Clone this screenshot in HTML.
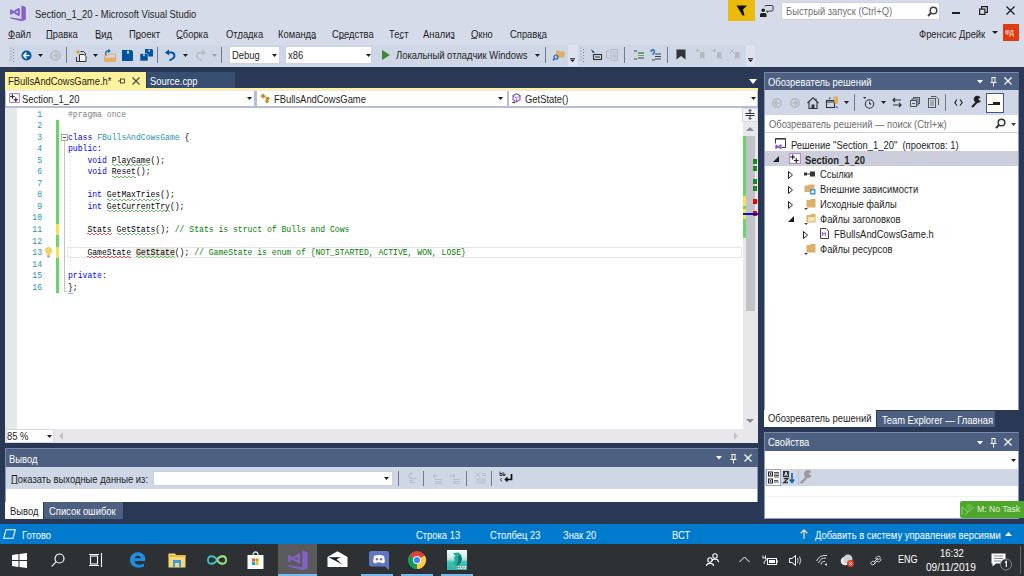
<!DOCTYPE html>
<html><head><meta charset="utf-8">
<style>
*{margin:0;padding:0;box-sizing:border-box}
html,body{width:1024px;height:576px;overflow:hidden}
body{position:relative;background:#293955;font-family:"Liberation Sans",sans-serif;font-size:9.4px;line-height:12px;color:#1e1e1e}
.a{position:absolute}
.t{position:absolute;white-space:pre;line-height:12px;font-size:10.5px;transform:scaleX(.895);transform-origin:0 0}
.m{font-family:"Liberation Mono",monospace}
.w{color:#fff}
svg{position:absolute;overflow:visible}
</style></head><body>

<!-- ===== TOP CHROME ===== -->
<div class="a" style="left:0;top:0;width:1024px;height:67px;background:#d6dbe9"></div>
<!-- VS logo -->
<svg style="left:6px;top:2px" width="24" height="24" viewBox="0 0 24 24"><g fill="#8661c5" fill-rule="evenodd"><path d="M15.4 3.3 L19.8 5.2 V17.8 L15.8 19.3 L15.4 18.6Z"/><path d="M3.8 15.2 L15.4 17.0 L15.8 19.3 L4.6 16.4Z"/></g><g fill="none" stroke="#8661c5" stroke-linejoin="round"><path d="M4.9 8.1 L7.3 10 L4.9 11.9Z" stroke-width="1.7"/><path d="M7.6 10 L12.9 6.9 V13.1Z" stroke-width="1.9"/></g></svg>
<div class="t" style="left:35px;top:7.9px;color:#1e1e1e">Section_1_20 - Microsoft Visual Studio</div>

<!-- feedback flag -->
<div class="a" style="left:728px;top:0;width:27px;height:21px;background:#eabb0c"></div>
<svg style="left:736px;top:5px" width="12" height="12" viewBox="0 0 12 12"><path d="M0.5 0.5 L11 0.5 L7 4.5 L8.5 10.5 L6.5 10.5 Z" fill="#111"/></svg>
<!-- person icon -->
<svg style="left:759px;top:4.5px" width="15" height="13" viewBox="0 0 15 13"><path d="M6 1.5 Q6 0.5 7 0.5 H13 Q14 0.5 14 1.5 V5 Q14 6 13 6 H10 L8.5 7.5 V6 H7" fill="none" stroke="#2a2a2a" stroke-width="0.9"/><circle cx="4.2" cy="5.2" r="1.8" fill="#1e1e1e"/><path d="M1 12 V9.5 Q1 8 2.5 8 H6 Q7.5 8 7.5 9.5 V12Z" fill="#1e1e1e"/></svg>
<!-- quick launch -->
<div class="a" style="left:781px;top:2px;width:159px;height:18px;background:#fff;border:1px solid #cbd1e0"></div>
<div class="t" style="left:786px;top:5.4px;color:#717171">Быстрый запуск (Ctrl+Q)</div>
<svg style="left:927px;top:6px" width="11" height="11" viewBox="0 0 11 11"><circle cx="6.5" cy="4.5" r="3.3" fill="none" stroke="#424242" stroke-width="1.5"/><path d="M4.2 6.8 L1 10" stroke="#424242" stroke-width="2"/></svg>
<!-- window buttons -->
<div class="a" style="left:952px;top:12px;width:8px;height:2px;background:#1e1e1e"></div>
<svg style="left:979px;top:6px" width="9" height="9" viewBox="0 0 9 9"><rect x="0.6" y="3.1" width="5.3" height="5.3" fill="none" stroke="#1e1e1e" stroke-width="1.2"/><path d="M2.6 3 V0.6 H8.4 V6.4 H6" fill="none" stroke="#1e1e1e" stroke-width="1.2"/></svg>
<svg style="left:1006px;top:6px" width="9" height="9" viewBox="0 0 9 9"><path d="M0.5 0.5 L8.5 8.5 M8.5 0.5 L0.5 8.5" stroke="#1e1e1e" stroke-width="1.3"/></svg>

<!-- menu -->
<div class="t" style="left:8px;top:27.9px">Файл</div>
<div class="t" style="left:46px;top:27.9px">Правка</div>
<div class="t" style="left:95px;top:27.9px">Вид</div>
<div class="t" style="left:129px;top:27.9px">Проект</div>
<div class="t" style="left:176px;top:27.9px">Сборка</div>
<div class="t" style="left:226px;top:27.9px">Отладка</div>
<div class="t" style="left:278px;top:27.9px">Команда</div>
<div class="t" style="left:332px;top:27.9px">Средства</div>
<div class="t" style="left:389px;top:27.9px">Тест</div>
<div class="t" style="left:423px;top:27.9px">Анализ</div>
<div class="t" style="left:471px;top:27.9px">Окно</div>
<div class="t" style="left:510px;top:27.9px">Справка</div>
<div class="a" style="left:8px;top:38px;width:7px;height:1px;background:#5a5a5a"></div>
<div class="a" style="left:46px;top:38px;width:7px;height:1px;background:#5a5a5a"></div>
<div class="a" style="left:96px;top:38px;width:6px;height:1px;background:#5a5a5a"></div>
<div class="a" style="left:136px;top:38px;width:5px;height:1px;background:#5a5a5a"></div>
<div class="a" style="left:177px;top:38px;width:6px;height:1px;background:#5a5a5a"></div>
<div class="a" style="left:237px;top:38px;width:5px;height:1px;background:#5a5a5a"></div>
<div class="a" style="left:312px;top:38px;width:4px;height:1px;background:#5a5a5a"></div>
<div class="a" style="left:339px;top:38px;width:7px;height:1px;background:#5a5a5a"></div>
<div class="a" style="left:399px;top:38px;width:4px;height:1px;background:#5a5a5a"></div>
<div class="a" style="left:451px;top:38px;width:4px;height:1px;background:#5a5a5a"></div>
<div class="a" style="left:471px;top:38px;width:6px;height:1px;background:#5a5a5a"></div>
<div class="a" style="left:539px;top:38px;width:4px;height:1px;background:#5a5a5a"></div>
<div class="t" style="left:919px;top:27.6px">Френсис Дрейк</div>
<svg style="left:992px;top:31px" width="6" height="4" viewBox="0 0 6 4"><path d="M0 0 H6 L3 3Z" fill="#1e1e1e"/></svg>
<div class="a" style="left:1003px;top:24px;width:16px;height:17px;background:#e03c14"></div>
<div class="t" style="left:1005px;top:27px;font-size:7px;color:#fff">ФД</div>

<!-- toolbar -->
<div class="a" style="left:9px;top:45px;width:559px;height:21px;background:#cfd6e5"></div>
<div class="a" style="left:568px;top:45px;width:10px;height:21px;background:#dde2ee"></div>
<div class="a" style="left:578px;top:45px;width:168px;height:21px;background:#cfd6e5"></div>
<div class="a" style="left:746px;top:45px;width:9px;height:21px;background:#dde2ee"></div>
<!-- grips -->
<svg style="left:10px;top:47px" width="5" height="16" viewBox="0 0 5 16"><path d="M0.5 0.5h1v1h-1zM3 2h1v1h-1zM0.5 3.5h1v1h-1zM3 5h1v1h-1zM0.5 6.5h1v1h-1zM3 8h1v1h-1zM0.5 9.5h1v1h-1zM3 11h1v1h-1zM0.5 12.5h1v1h-1zM3 14h1v1h-1z" fill="#7b8aab"/></svg>
<svg style="left:580px;top:47px" width="5" height="16" viewBox="0 0 5 16"><path d="M0.5 0.5h1v1h-1zM3 2h1v1h-1zM0.5 3.5h1v1h-1zM3 5h1v1h-1zM0.5 6.5h1v1h-1zM3 8h1v1h-1zM0.5 9.5h1v1h-1zM3 11h1v1h-1zM0.5 12.5h1v1h-1zM3 14h1v1h-1z" fill="#7b8aab"/></svg>
<!-- back / fwd -->
<svg style="left:21px;top:50px" width="11" height="11" viewBox="0 0 11 11"><circle cx="5.5" cy="5.5" r="5" fill="#00539c"/><path d="M2.5 5.5 L5.5 2.5 M2.5 5.5 L5.5 8.5 M2.5 5.5 H8.5" stroke="#fff" stroke-width="1.6"/></svg>
<svg style="left:38px;top:54px" width="6" height="3" viewBox="0 0 6 3"><path d="M0 0H5L2.5 3Z" fill="#1e1e1e"/></svg>
<svg style="left:50px;top:50px" width="11" height="11" viewBox="0 0 11 11"><circle cx="5.5" cy="5.5" r="4.5" fill="none" stroke="#b5b8bf" stroke-width="1.6"/><path d="M8 5.5 L5.5 3 M8 5.5 L5.5 8 M8 5.5 H3" stroke="#b5b8bf" stroke-width="1.4"/></svg>
<div class="a" style="left:66px;top:47px;width:1px;height:16px;background:#6c7a96"></div>
<!-- new project -->
<svg style="left:75px;top:49px" width="12" height="13" viewBox="0 0 12 13"><path d="M5.5 2.5 H8.5 L10.5 4.5 V6" fill="none" stroke="#333" stroke-width="1"/><path d="M4.5 5.5 H9 L11 7.5 V12.5 H4.5 Z" fill="#f3f3f3" stroke="#333" stroke-width="1"/><path d="M1.5 8 V12.5 H4.5" fill="none" stroke="#333" stroke-width="1"/><path d="M3 0.3 L3.7 2.3 L5.7 3 L3.7 3.7 L3 5.7 L2.3 3.7 L0.3 3 L2.3 2.3Z" fill="#d89b2f"/><circle cx="3" cy="3" r="1.3" fill="#d89b2f"/></svg>
<svg style="left:93px;top:54px" width="6" height="3" viewBox="0 0 6 3"><path d="M0 0H5L2.5 3Z" fill="#1e1e1e"/></svg>
<!-- open -->
<svg style="left:104px;top:49px" width="12" height="13" viewBox="0 0 12 13"><path d="M0.5 6.5 H4 L5 5 H11.5 V12.5 H0.5 Z" fill="none" stroke="#d9ad66" stroke-width="1"/><path d="M0.5 8.5 H11.5 V12.5 H0.5Z" fill="#e3b163"/><path d="M1.8 6 V4 Q1.8 2 4 2 H5.5 M4.3 0.5 L5.8 2 L4.3 3.5" fill="none" stroke="#1e66b9" stroke-width="1.3"/></svg>
<!-- save -->
<svg style="left:122px;top:50px" width="11" height="11" viewBox="0 0 11 11"><path d="M0 0 H9.5 L11 1.5 V11 H0Z" fill="#00539c"/><rect x="5" y="0.8" width="2" height="2.7" fill="#cfd6e5"/><path d="M2 0 V4.5 H8.5 V0" fill="none" stroke="#00539c" stroke-width="0.8"/></svg>
<svg style="left:140px;top:49px" width="13" height="12" viewBox="0 0 13 12"><path d="M5 0 H12 L13 1 V7.5 H5Z" fill="#00539c"/><rect x="8.5" y="0.6" width="1.5" height="2" fill="#cfd6e5"/><path d="M0 4.5 H7 L8 5.5 V12 H0Z" fill="#00539c" stroke="#cfd6e5" stroke-width="0.6"/><rect x="3.2" y="5.1" width="1.5" height="2" fill="#cfd6e5"/></svg>
<div class="a" style="left:157px;top:47px;width:1px;height:16px;background:#6c7a96"></div>
<!-- undo redo -->
<svg style="left:165px;top:49px" width="12" height="12" viewBox="0 0 12 12"><path d="M1.5 3.5 H6 C10 3.5 10.5 8 7.5 9.8 L4.5 11.5" fill="none" stroke="#00539c" stroke-width="1.9"/><path d="M0 3.5 L4 0.5 V6.5Z" fill="#00539c"/></svg>
<svg style="left:183px;top:54px" width="6" height="3" viewBox="0 0 6 3"><path d="M0 0H5L2.5 3Z" fill="#1e1e1e"/></svg>
<svg style="left:194px;top:49px" width="12" height="12" viewBox="0 0 12 12"><path d="M10.5 3.5 H6 C2 3.5 1.5 8 4.5 9.8 L7.5 11.5" fill="none" stroke="#b9bcc4" stroke-width="1.5"/><path d="M12 3.5 L8 0.5 V6.5Z" fill="#b9bcc4"/></svg>
<svg style="left:212px;top:54px" width="6" height="3" viewBox="0 0 6 3"><path d="M0 0H5L2.5 3Z" fill="#9a9fab"/></svg>
<div class="a" style="left:221px;top:47px;width:1px;height:16px;background:#6c7a96"></div>
<!-- combos -->
<div class="a" style="left:229px;top:46px;width:51px;height:18px;background:#fff;border:1px solid #cbd1e0"></div>
<div class="t" style="left:232px;top:49.1px">Debug</div>
<svg style="left:272px;top:54px" width="6" height="3" viewBox="0 0 6 3"><path d="M0 0H5L2.5 3Z" fill="#1e1e1e"/></svg>
<div class="a" style="left:285px;top:46px;width:87px;height:18px;background:#fff;border:1px solid #cbd1e0"></div>
<div class="t" style="left:288px;top:49.1px">x86</div>
<svg style="left:366px;top:54px" width="6" height="3" viewBox="0 0 6 3"><path d="M0 0H5L2.5 3Z" fill="#1e1e1e"/></svg>
<svg style="left:382px;top:50px" width="8" height="10" viewBox="0 0 8 10"><path d="M0 0 L8 5 L0 10Z" fill="#388a34"/></svg>
<div class="t" style="left:396px;top:49.1px">Локальный отладчик Windows</div>
<svg style="left:535px;top:54px" width="6" height="3" viewBox="0 0 6 3"><path d="M0 0H5L2.5 3Z" fill="#1e1e1e"/></svg>
<div class="a" style="left:545px;top:47px;width:1px;height:16px;background:#6c7a96"></div>
<svg style="left:553px;top:49px" width="12" height="12" viewBox="0 0 12 12"><path d="M3 1.5 H6 L7 2.5 H11.5 V8.5 H3Z" fill="#dcb067"/><circle cx="3" cy="8" r="2" fill="none" stroke="#1e66b9" stroke-width="1.2"/><path d="M1.7 9.5 L0 11.5" stroke="#1e66b9" stroke-width="1.4"/></svg>
<svg style="left:570px;top:58px" width="5" height="4" viewBox="0 0 5 4"><path d="M0 0H5V0.8H0Z M0 1.6H5L2.5 4Z" fill="#1e1e1e"/></svg>
<!-- toolbar 2 icons -->
<svg style="left:590px;top:49px" width="12" height="12" viewBox="0 0 12 12"><path d="M1 0 L5 3.5 L2.5 3.8 Z" fill="#00539c"/><rect x="3.5" y="5.5" width="8" height="5" fill="none" stroke="#333" stroke-width="1.1"/><path d="M5 8 H10" stroke="#333"/></svg>
<svg style="left:606px;top:49px" width="12" height="12" viewBox="0 0 12 12"><path d="M0.5 2 H3 M0.5 2 V9 H3 M5 0.5 H11.5 V11.5 H5Z M6.5 3h4M6.5 5h4M6.5 7h4M6.5 9h4" fill="none" stroke="#b5b8bf"/></svg>
<div class="a" style="left:624px;top:47px;width:1px;height:16px;background:#6c7a96"></div>
<svg style="left:634px;top:50px" width="10" height="10" viewBox="0 0 10 10"><path d="M0 1h3M4 3h6M4 5.5h6M4 8h6M0 9h3" stroke="#444" stroke-width="1.2"/><path d="M4 3h6M4 5.5h6" stroke="#4cb84c" stroke-width="1.2"/></svg>
<svg style="left:650px;top:49px" width="11" height="12" viewBox="0 0 11 12"><path d="M1 3 C1 0 5 0 4.5 3 L3 5 V6" fill="none" stroke="#1e66b9" stroke-width="1.3"/><path d="M5 5h6M5 7.5h6M5 10h6M2 11h3" stroke="#444" stroke-width="1.2"/></svg>
<div class="a" style="left:667px;top:47px;width:1px;height:16px;background:#6c7a96"></div>
<svg style="left:676px;top:49px" width="10" height="11" viewBox="0 0 10 11"><path d="M0.5 0.5 H9.5 V10.5 L5 7 L0.5 10.5Z" fill="#333"/></svg>
<svg style="left:695px;top:49px" width="10" height="11" viewBox="0 0 10 11"><path d="M5 1.5 L1 1.5 M3 0 L1 1.5 L3 3" stroke="#b5b8bf" fill="none"/><path d="M5 3 H9.5 V10.5 L7 8.5 L5 10.5Z" fill="#b5b8bf"/></svg>
<svg style="left:712px;top:49px" width="10" height="11" viewBox="0 0 10 11"><path d="M0 1.5 L4 1.5 M2 0 L4 1.5 L2 3" stroke="#b5b8bf" fill="none"/><path d="M5 3 H9.5 V10.5 L7 8.5 L5 10.5Z" fill="#b5b8bf"/></svg>
<svg style="left:730px;top:49px" width="10" height="11" viewBox="0 0 10 11"><path d="M0 0 L4 4 M4 0 L0 4" stroke="#b5b8bf" fill="none"/><path d="M5 3 H9.5 V10.5 L7 8.5 L5 10.5Z" fill="#b5b8bf"/></svg>
<svg style="left:748px;top:58px" width="5" height="4" viewBox="0 0 5 4"><path d="M0 0H5V0.8H0Z M0 1.6H5L2.5 4Z" fill="#1e1e1e"/></svg>

<!-- ===== EDITOR ===== -->
<div class="a" style="left:5px;top:72px;width:141px;height:18px;background:#fff29d"></div>
<div class="t" style="left:8px;top:75px">FBullsAndCowsGame.h*</div>
<svg style="left:118px;top:78px" width="7" height="6" viewBox="0 0 7 6"><path d="M0 3H2.5M2.5 0.5V5.5M2.5 1H6.5V5H2.5" fill="none" stroke="#4a4a4a" stroke-width="1"/></svg>
<svg style="left:132px;top:77px" width="8" height="8" viewBox="0 0 8 8"><path d="M0.5 0.5L7.5 7.5M7.5 0.5L0.5 7.5" stroke="#4a4a4a" stroke-width="1.2"/></svg>
<div class="a" style="left:147px;top:72px;width:88px;height:17px;background:#364e6f"></div>
<div class="t w" style="left:150px;top:75px">Source.cpp</div>
<svg style="left:749px;top:79px" width="8" height="5" viewBox="0 0 8 5"><path d="M0 0H8L4 5Z" fill="#fff"/></svg>
<div class="a" style="left:5px;top:88px;width:753px;height:2px;background:#fff29d"></div>
<!-- nav bar -->
<div class="a" style="left:5px;top:90px;width:753px;height:18px;background:#b4bfd3"></div>
<div class="a" style="left:5px;top:90px;width:753px;height:1px;background:#e6e9f0"></div>
<div class="a" style="left:6px;top:91px;width:248px;height:15px;background:#fff"></div>
<div class="a" style="left:257px;top:91px;width:250px;height:15px;background:#fff"></div>
<div class="a" style="left:509px;top:91px;width:248px;height:15px;background:#fff"></div>
<svg style="left:9px;top:93px" width="11" height="10" viewBox="0 0 11 10"><rect x="0.6" y="0.6" width="9.8" height="8.8" fill="#fff" stroke="#b583d6" stroke-width="1.1"/><path d="M3.4 1.3V5.7M1.2 3.5H5.6M6.8 4.5V8.9M4.6 6.7H9" stroke="#2a2a2a" stroke-width="1.1" fill="none"/><path d="M3.4 2.4L4.5 3.5L3.4 4.6L2.3 3.5ZM6.8 5.6L7.9 6.7L6.8 7.8L5.7 6.7Z" fill="#2a2a2a"/></svg>
<div class="t" style="left:22px;top:92.5px">Section_1_20</div>
<svg style="left:247px;top:97px" width="5" height="3" viewBox="0 0 5 3"><path d="M0 0H5L2.5 3Z" fill="#1e1e1e"/></svg>
<svg style="left:260px;top:93px" width="11" height="11" viewBox="0 0 11 11"><path d="M0.5 3 L3 0.5 L5.5 3 L3 5.5Z M6 5.5 L8 3.5 L10 5.5 L8 7.5Z M5 8.5 L7 6.5 L9 8.5 L7 10.5Z" fill="#c48a1b"/><path d="M4 3.5 L7 5 L6 8" stroke="#c48a1b" fill="none"/></svg>
<div class="t" style="left:274px;top:92.5px">FBullsAndCowsGame</div>
<svg style="left:498px;top:97px" width="5" height="3" viewBox="0 0 5 3"><path d="M0 0H5L2.5 3Z" fill="#1e1e1e"/></svg>
<svg style="left:512px;top:93px" width="9" height="10" viewBox="0 0 9 10"><path d="M4.5 0.7 L8 2.7 V6.7 L4.5 8.7 L1 6.7 V2.7Z" fill="none" stroke="#8a5cc4" stroke-width="1.2"/><path d="M1 3L4.5 5L8 3M4.5 5V8.7" stroke="#8a5cc4" fill="none" stroke-width="0.8"/><path d="M0 9.5 H3 M2 8.5 L3 9.5 L2 10.5" stroke="#333" stroke-width="0.8" fill="none"/></svg>
<div class="t" style="left:525px;top:92.5px">GetState()</div>
<svg style="left:751px;top:97px" width="5" height="3" viewBox="0 0 5 3"><path d="M0 0H5L2.5 3Z" fill="#1e1e1e"/></svg>

<!-- editor body -->
<div class="a" style="left:5px;top:108px;width:753px;height:335px;background:#fff"></div>
<div class="a" style="left:5px;top:108px;width:12px;height:321px;background:#e6e7e8"></div>
<!-- vertical scrollbar -->
<div class="a" style="left:743px;top:108px;width:15px;height:321px;background:#e8e8ec"></div>
<div class="a" style="left:742px;top:108px;width:16px;height:14px;background:#f3f4f8;border:1px solid #d5d9e3"></div>
<svg style="left:745px;top:109px" width="10" height="11" viewBox="0 0 10 11"><path d="M0.5 4.5H9.5M0.5 6.5H9.5M5 1V4M5 7V10" stroke="#2a2a2a" stroke-width="1"/><path d="M3.5 2L5 0.5L6.5 2M3.5 9L5 10.5L6.5 9" fill="none" stroke="#2a2a2a"/></svg>
<svg style="left:746px;top:127px" width="8" height="4" viewBox="0 0 8 4"><path d="M0 4H8L4 0Z" fill="#868999"/></svg>
<div class="a" style="left:746px;top:136px;width:9px;height:175px;background:#c2c3c9"></div>
<div class="a" style="left:743px;top:136px;width:3px;height:102px;background:#6bd56b"></div>
<div class="a" style="left:743px;top:196px;width:3px;height:10px;background:#f5e05a"></div>
<div class="a" style="left:743px;top:209px;width:3px;height:10px;background:#f5e05a"></div>
<div class="a" style="left:753px;top:159px;width:4px;height:5px;background:#1d8a1d"></div>
<div class="a" style="left:753px;top:166px;width:4px;height:5px;background:#1d8a1d"></div>
<div class="a" style="left:753px;top:179px;width:4px;height:5px;background:#1d8a1d"></div>
<div class="a" style="left:753px;top:186px;width:4px;height:5px;background:#1d8a1d"></div>
<div class="a" style="left:753px;top:199px;width:4px;height:5px;background:#f20000"></div>
<div class="a" style="left:753px;top:211px;width:4px;height:5px;background:#f20000"></div>
<div class="a" style="left:743px;top:213px;width:15px;height:2px;background:#0a12c8"></div>
<svg style="left:746px;top:419px" width="8" height="4" viewBox="0 0 8 4"><path d="M0 0H8L4 4Z" fill="#868999"/></svg>
<!-- horizontal bar -->
<div class="a" style="left:5px;top:429px;width:753px;height:14px;background:#e8e8ec"></div>
<div class="a" style="left:6px;top:429px;width:48px;height:14px;background:#fff;border:1px solid #d5d9e3"></div>
<div class="t" style="left:7px;top:430.1px">85 %</div>
<svg style="left:47px;top:435px" width="5" height="3" viewBox="0 0 5 3"><path d="M0 0H5L2.5 3Z" fill="#1e1e1e"/></svg>
<svg style="left:59px;top:432px" width="4" height="8" viewBox="0 0 4 8"><path d="M4 0V8L0 4Z" fill="#c2c3c9"/></svg>
<svg style="left:734px;top:432px" width="4" height="8" viewBox="0 0 4 8"><path d="M0 0V8L4 4Z" fill="#c2c3c9"/></svg>

<!-- code gutter -->
<div class="a" style="left:56px;top:120px;width:3px;height:173px;background:#6bd56b"></div>
<div class="a" style="left:56px;top:224px;width:3px;height:11px;background:#f5e05a"></div>
<div class="a" style="left:56px;top:247px;width:3px;height:11px;background:#f5e05a"></div>
<div class="a" style="left:67px;top:247px;width:675px;height:11px;border:1px solid #e3e5ec"></div>
<div class="a" style="left:64px;top:140px;width:1px;height:152px;background:#c4c4c4"></div>
<div class="a" style="left:64px;top:291px;width:3px;height:1px;background:#c4c4c4"></div>
<div class="a" style="left:68px;top:293px;width:5px;height:1px;background:#7fb2e5"></div>
<svg style="left:61px;top:134px" width="7" height="7" viewBox="0 0 7 7"><rect x="0.5" y="0.5" width="6" height="6" fill="#fff" stroke="#a5a5a5"/><path d="M2 3.5H5" stroke="#444"/></svg>
<div class="a" style="left:70px;top:152px;width:1px;height:117px;background:repeating-linear-gradient(#d0d0d0 0 1px,transparent 1px 4px)"></div>
<svg style="left:45px;top:247px" width="7" height="11" viewBox="0 0 7 11"><circle cx="3.5" cy="3.5" r="3" fill="#f7d45c" stroke="#e0b020" stroke-width="0.6"/><rect x="2" y="6" width="3" height="2.5" fill="#f7d45c"/><rect x="2.3" y="8.5" width="2.4" height="2" fill="#999"/></svg>
<div class="a m" id="lnums" style="left:17px;top:108.7px;width:25px;transform:scaleX(0.8695);transform-origin:100% 0;font-size:9.3px;line-height:11.53px;color:#2b91af;text-align:right;white-space:pre">1
2
3
4
5
6
7
8
9
10
11
12
13
14
15
16</div>
<style>
.code{position:absolute;left:68px;top:108.7px;font-family:"Liberation Mono",monospace;font-size:9.3px;line-height:11.53px;white-space:pre;color:#000;transform:scaleX(0.8695);transform-origin:0 0}
.kw{color:#0000ff}.ty{color:#2b91af}.cm{color:#008000}.pp{color:#808080}
.sqg,.sqr{height:2px}
.sqg{background:linear-gradient(90deg,#6cbf6c 50%,transparent 50%) 0 0/4px 1px repeat-x,linear-gradient(90deg,transparent 50%,#6cbf6c 50%) 0 1px/4px 1px repeat-x}
.sqr{background:linear-gradient(90deg,#ee5050 50%,transparent 50%) 0 0/4px 1px repeat-x,linear-gradient(90deg,transparent 50%,#ee5050 50%) 0 1px/4px 1px repeat-x}
.hl{background:#e4e4da}
</style>
<div class="code"><span class="pp">#pragma once</span>

<span class="kw">class</span> <span class="ty">FBullsAndCowsGame</span> {
<span class="kw">public</span>:
    <span class="kw">void</span> <span class="sg">PlayGame</span>();
    <span class="kw">void</span> <span class="sg">Reset</span>();

    <span class="kw">int</span> <span class="sg">GetMaxTries</span>();
    <span class="kw">int</span> <span class="sg">GetCurrentTry</span>();

    <span class="sr">Stats</span> <span class="sg">GetStats</span>(); <span class="cm">// Stats is struct of Bulls and Cows</span>

    <span class="sr">GameState</span> <span class="sg hl">GetState</span>(); <span class="cm">// GameState is enum of {NOT_STARTED, ACTIVE, WON, LOSE}</span>

<span class="kw">private</span>:
};</div>

<div class="a sqg" style="left:111.7px;top:164px;width:38.8px"></div>
<div class="a sqg" style="left:111.7px;top:176px;width:24.3px"></div>
<div class="a sqg" style="left:106.8px;top:199px;width:53.4px"></div>
<div class="a sqg" style="left:106.8px;top:210px;width:63.1px"></div>
<div class="a sqr" style="left:87.4px;top:233px;width:24.3px"></div>
<div class="a sqg" style="left:116.5px;top:233px;width:38.8px"></div>
<div class="a sqr" style="left:87.4px;top:256px;width:43.7px"></div>
<div class="a sqg" style="left:135.9px;top:256px;width:38.8px"></div>

<!-- ===== SOLUTION EXPLORER ===== -->
<div class="a" style="left:764px;top:72px;width:255px;height:338px;background:#fff;border:1px solid #8e9bbc;border-top:none;border-bottom:none"></div>
<div class="a" style="left:764px;top:72px;width:255px;height:18px;background:#4d6082;box-shadow:inset 1px 1px 0 #7888aa"></div>
<div class="t w" style="left:768px;top:76.4px">Обозреватель решений</div>
<svg style="left:977px;top:80px" width="6" height="4" viewBox="0 0 6 4"><path d="M0 0H6L3 3.5Z" fill="#fff"/></svg>
<svg style="left:990px;top:77px" width="7" height="10" viewBox="0 0 7 10"><path d="M1.5 0.5H5.5M2 0.5V5.5M5 0.5V5.5M0.5 5.5H6.5M3.5 5.5V9.5" fill="none" stroke="#fff" stroke-width="1"/></svg>
<svg style="left:1004px;top:77px" width="8" height="8" viewBox="0 0 8 8"><path d="M0.5 0.5L7.5 7.5M7.5 0.5L0.5 7.5" stroke="#fff" stroke-width="1.2"/></svg>
<!-- SE toolbar -->
<div class="a" style="left:765px;top:90px;width:253px;height:25px;background:#cfd6e5"></div>
<svg style="left:772px;top:98px" width="10" height="10" viewBox="0 0 10 10"><circle cx="5" cy="5" r="4.2" fill="none" stroke="#b5b8bf" stroke-width="1.5"/><path d="M2.5 5H7.5M2.5 5L5 2.5M2.5 5L5 7.5" stroke="#b5b8bf" stroke-width="1.3" fill="none"/></svg>
<svg style="left:790px;top:98px" width="10" height="10" viewBox="0 0 10 10"><circle cx="5" cy="5" r="4.2" fill="none" stroke="#b5b8bf" stroke-width="1.5"/><path d="M2.5 5H7.5M7.5 5L5 2.5M7.5 5L5 7.5" stroke="#b5b8bf" stroke-width="1.3" fill="none"/></svg>
<svg style="left:807px;top:97px" width="12" height="12" viewBox="0 0 12 12"><path d="M0.5 6 L6 0.8 L11.5 6 M2 4.8 V11.5 H10 V4.8" fill="none" stroke="#333" stroke-width="1.1"/><rect x="4.5" y="7.5" width="3" height="4" fill="#333"/><path d="M9 1.5V3.5" stroke="#333"/></svg>
<svg style="left:826px;top:96px" width="13" height="13" viewBox="0 0 13 13"><rect x="0.5" y="4.5" width="8" height="7" fill="none" stroke="#333" stroke-width="1.1"/><path d="M0.5 6H8.5" stroke="#333"/><path d="M7 0.5H12V8H9" fill="#dcb067"/><path d="M3 3L4.5 1.5M10 10.5L11.5 12" stroke="#1e66b9" stroke-width="1.2"/></svg>
<svg style="left:844px;top:101px" width="5" height="3" viewBox="0 0 5 3"><path d="M0 0H5L2.5 3Z" fill="#1e1e1e"/></svg>
<div class="a" style="left:854px;top:94px;width:1px;height:17px;background:#6c7a96"></div>
<svg style="left:863px;top:97px" width="12" height="12" viewBox="0 0 12 12"><circle cx="6.5" cy="7" r="4.2" fill="none" stroke="#333" stroke-width="1.1"/><path d="M6.5 4.5V7H8.5" stroke="#333" fill="none"/><path d="M0 0H3.5L1.75 2Z" fill="#333"/></svg>
<svg style="left:881px;top:101px" width="5" height="3" viewBox="0 0 5 3"><path d="M0 0H5L2.5 3Z" fill="#1e1e1e"/></svg>
<svg style="left:892px;top:97px" width="10" height="11" viewBox="0 0 10 11"><path d="M9 3H1M3 1L1 3L3 5M1 8H9M7 6L9 8L7 10" fill="none" stroke="#333" stroke-width="1.2"/></svg>
<svg style="left:910px;top:97px" width="10" height="10" viewBox="0 0 10 10"><rect x="3.5" y="0.5" width="6" height="6" fill="#cfd6e5" stroke="#555"/><rect x="2" y="2" width="6" height="6" fill="#cfd6e5" stroke="#555"/><rect x="0.5" y="3.5" width="6" height="6" fill="#cfd6e5" stroke="#555"/><path d="M2 6.5H5" stroke="#1e66b9"/></svg>
<svg style="left:928px;top:96px" width="11" height="12" viewBox="0 0 11 12"><path d="M3 0.5H8L10.5 3V9" fill="none" stroke="#555"/><rect x="0.5" y="2.5" width="7" height="9" fill="#cfd6e5" stroke="#555"/><path d="M2 5H6M2 7H6M2 9H6" stroke="#777"/></svg>
<div class="a" style="left:945px;top:94px;width:1px;height:17px;background:#6c7a96"></div>
<svg style="left:954px;top:99px" width="9" height="7" viewBox="0 0 9 7"><path d="M3 0.5L0.8 3.5L3 6.5M6 0.5L8.2 3.5L6 6.5" fill="none" stroke="#222" stroke-width="1.2"/></svg>
<svg style="left:971px;top:96px" width="12" height="12" viewBox="0 0 12 12"><path d="M1 11 L6 6" stroke="#222" stroke-width="2.2"/><path d="M5 6.5 A3.5 3.5 0 1 1 9.5 2 L7.5 2.5 L8 4.5 L10 4.5 A3.5 3.5 0 0 1 5 6.5Z" fill="#222"/></svg>
<div class="a" style="left:986px;top:93px;width:18px;height:20px;background:#fffdf0;border:1px solid #3a5a8c"></div>
<div class="a" style="left:988px;top:104px;width:6px;height:1px;background:#222"></div>
<div class="a" style="left:993px;top:101.5px;width:7px;height:3px;background:#222"></div>
<!-- SE search -->
<div class="a" style="left:765px;top:115px;width:253px;height:18px;background:#fff;border-bottom:1px solid #cbd1e0"></div>
<div class="t" style="left:769px;top:117.5px;color:#6d6d6d">Обозреватель решений — поиск (Ctrl+ж)</div>
<svg style="left:995px;top:118px" width="11" height="11" viewBox="0 0 11 11"><circle cx="6.5" cy="4.5" r="3.3" fill="none" stroke="#333" stroke-width="1.5"/><path d="M4.2 6.8 L1 10" stroke="#333" stroke-width="2"/></svg>
<svg style="left:1011px;top:123px" width="5" height="3" viewBox="0 0 5 3"><path d="M0 0H5L2.5 3Z" fill="#444"/></svg>
<!-- tree -->
<div class="a" style="left:765px;top:151px;width:253px;height:15px;background:#cccedb"></div>
<svg style="left:775px;top:137px" width="12" height="13" viewBox="0 0 12 13"><path d="M0.5 6.5 V1.5 H10.5 V10.5 H7" fill="none" stroke="#3a3a3a" stroke-width="1"/><rect x="0.5" y="1" width="10" height="1.6" fill="#3a3a3a"/><g fill="none" stroke="#8a3fd0" stroke-width="1.2" stroke-linejoin="round"><path d="M1 8.3 L3 9.8 L1 11.3Z"/><path d="M3.2 9.8 L6 8 V11.6Z"/></g></svg>
<div class="t" style="left:791px;top:139px">Решение "Section_1_20"  (проектов: 1)</div>
<svg style="left:773px;top:156px" width="6" height="6" viewBox="0 0 6 6"><path d="M6 0V6H0Z" fill="#1e1e1e"/></svg>
<svg style="left:789px;top:153px" width="12" height="11" viewBox="0 0 12 11"><rect x="0.6" y="0.6" width="10.8" height="9.8" fill="#fff" stroke="#b583d6" stroke-width="1.1"/><path d="M3.7 1.6V6.4M1.3 4H6.1M7.3 5.1V9.9M4.9 7.5H9.7" stroke="#2a2a2a" stroke-width="1.1" fill="none"/><path d="M3.7 2.8L4.9 4L3.7 5.2L2.5 4ZM7.3 6.3L8.5 7.5L7.3 8.7L6.1 7.5Z" fill="#2a2a2a"/></svg>
<div class="t" style="left:805px;top:154px;font-weight:bold">Section_1_20</div>
<svg style="left:788px;top:171px" width="5" height="8" viewBox="0 0 5 8"><path d="M0.5 0.5L4.5 4L0.5 7.5Z" fill="none" stroke="#1e1e1e"/></svg>
<svg style="left:804px;top:171px" width="11" height="6" viewBox="0 0 11 6"><rect x="0" y="1.5" width="3" height="3" fill="#333"/><path d="M3 3H6" stroke="#333"/><rect x="6" y="0.5" width="5" height="5" fill="#333"/></svg>
<div class="t" style="left:820px;top:168.4px">Ссылки</div>
<svg style="left:788px;top:186px" width="5" height="8" viewBox="0 0 5 8"><path d="M0.5 0.5L4.5 4L0.5 7.5Z" fill="none" stroke="#1e1e1e"/></svg>
<svg style="left:804px;top:183px" width="12" height="12" viewBox="0 0 12 12"><path d="M0.5 2.5H4L5 1.5H10.5V9H0.5Z" fill="#dcb067"/><rect x="6" y="6" width="5.5" height="5.5" fill="#3b9be0"/><rect x="7.5" y="7.5" width="2.5" height="2.5" fill="#fff"/></svg>
<div class="t" style="left:820px;top:183.4px">Внешние зависимости</div>
<svg style="left:788px;top:201px" width="5" height="8" viewBox="0 0 5 8"><path d="M0.5 0.5L4.5 4L0.5 7.5Z" fill="none" stroke="#1e1e1e"/></svg>
<svg style="left:804px;top:198px" width="12" height="12" viewBox="0 0 12 12"><path d="M2.5 2H6L7 1H11.5V9.5H2.5Z" fill="#dcb067"/><path d="M0 10H4L2 12Z" fill="#444"/></svg>
<div class="t" style="left:820px;top:198.4px">Исходные файлы</div>
<svg style="left:788px;top:216px" width="6" height="6" viewBox="0 0 6 6"><path d="M6 0V6H0Z" fill="#1e1e1e"/></svg>
<svg style="left:804px;top:213px" width="12" height="12" viewBox="0 0 12 12"><path d="M2.5 2H6L7 1H11.5V9.5H2.5Z" fill="#dcb067"/><path d="M4 4H10.5V8.5H4Z" fill="#f3e3c0"/><path d="M0 10H4L2 12Z" fill="#444"/></svg>
<div class="t" style="left:820px;top:213.4px">Файлы заголовков</div>
<svg style="left:803px;top:231px" width="5" height="8" viewBox="0 0 5 8"><path d="M0.5 0.5L4.5 4L0.5 7.5Z" fill="none" stroke="#1e1e1e"/></svg>
<svg style="left:820px;top:228px" width="9" height="11" viewBox="0 0 9 11"><path d="M0.5 0.5H6L8.5 3V10.5H0.5Z" fill="#fff" stroke="#444"/><path d="M2.5 4V8M2.5 6L5.5 5V8" stroke="#9b6bbf" stroke-width="1.2" fill="none"/></svg>
<div class="t" style="left:834px;top:228px">FBullsAndCowsGame.h</div>
<svg style="left:804px;top:243px" width="12" height="12" viewBox="0 0 12 12"><path d="M2.5 2H6L7 1H11.5V9.5H2.5Z" fill="#dcb067"/><path d="M0 10H4L2 12Z" fill="#444"/></svg>
<div class="t" style="left:820px;top:243.4px">Файлы ресурсов</div>
<!-- SE bottom tabs -->
<div class="a" style="left:764px;top:410px;width:112px;height:17px;background:#fff"></div>
<div class="t" style="left:768px;top:412.3px">Обозреватель решений</div>
<div class="a" style="left:877px;top:411px;width:118px;height:16px;background:#4d6082"></div>
<div class="t w" style="left:882px;top:413.5px">Team Explorer — Главная</div>

<!-- ===== PROPERTIES ===== -->
<div class="a" style="left:764px;top:432px;width:255px;height:87px;background:#fff;border:1px solid #8e9bbc;border-top:none"></div>
<div class="a" style="left:764px;top:432px;width:255px;height:19px;background:#4d6082;box-shadow:inset 1px 1px 0 #7888aa"></div>
<div class="t w" style="left:768px;top:436.4px">Свойства</div>
<svg style="left:977px;top:441px" width="6" height="4" viewBox="0 0 6 4"><path d="M0 0H6L3 3.5Z" fill="#fff"/></svg>
<svg style="left:990px;top:438px" width="7" height="10" viewBox="0 0 7 10"><path d="M1.5 0.5H5.5M2 0.5V5.5M5 0.5V5.5M0.5 5.5H6.5M3.5 5.5V9.5" fill="none" stroke="#fff" stroke-width="1"/></svg>
<svg style="left:1004px;top:438px" width="8" height="8" viewBox="0 0 8 8"><path d="M0.5 0.5L7.5 7.5M7.5 0.5L0.5 7.5" stroke="#fff" stroke-width="1.2"/></svg>
<svg style="left:1011px;top:459px" width="5" height="3" viewBox="0 0 5 3"><path d="M0 0H5L2.5 3Z" fill="#1e1e1e"/></svg>
<div class="a" style="left:765px;top:469px;width:253px;height:17px;background:#cfd6e5"></div>
<div class="a" style="left:766px;top:469px;width:15px;height:17px;background:#fdfdfd;border:1px solid #9aa6c0"></div>
<svg style="left:768px;top:471px" width="12" height="13" viewBox="0 0 12 13"><rect x="0.5" y="1" width="4" height="4" fill="#fff" stroke="#222"/><path d="M1.5 3H3.5M2.5 2V4" stroke="#222" stroke-width="0.8"/><rect x="0.5" y="8" width="4" height="4" fill="#fff" stroke="#222"/><path d="M1.5 10H3.5M2.5 9V11" stroke="#222" stroke-width="0.8"/><path d="M6 1.5H11M6 3H11M6 4.5H11M6 6H11M6 9.5H10M6 11H11" stroke="#444" stroke-width="0.9"/></svg>
<svg style="left:783px;top:471px" width="13" height="13" viewBox="0 0 13 13"><rect x="0" y="0" width="6" height="6" fill="#333"/><path d="M1.5 5L3 1L4.5 5M2 3.7H4" stroke="#fff" stroke-width="0.8" fill="none"/><path d="M0.8 7.5H5L0.8 11.5H5" stroke="#333" stroke-width="1.3" fill="none"/><path d="M9 2V11M6.8 8.5L9 11.5L11.2 8.5" stroke="#1064b0" stroke-width="1.6" fill="none"/></svg>
<div class="a" style="left:798px;top:471px;width:1px;height:14px;background:#b4bfd3"></div>
<svg style="left:800px;top:470px" width="14" height="14" viewBox="0 0 14 14"><path d="M1.5 12.5 L7 7" stroke="#9a9a9a" stroke-width="2.4" stroke-linecap="round"/><path d="M6 7.5 A4 4 0 1 1 11.5 2.2 L9 3 L9.5 5.2 L11.8 5 A4 4 0 0 1 6 7.5Z" fill="#9a9a9a"/></svg>
<div class="a" style="left:765px;top:496px;width:253px;height:1px;background:#f0f0f0"></div>
<div class="a" style="left:960px;top:501px;width:64px;height:17px;background:#4ea72c;border-radius:2px 0 0 2px"></div>
<svg style="left:961px;top:503px" width="15" height="13" viewBox="0 0 15 13"><path d="M1 4 L7 9 L13 4 M1 4 L1 12 M7 9 L4 12" fill="none" stroke="#9ed38a" stroke-width="0.9"/><circle cx="8" cy="4" r="3" fill="#60b840"/></svg>
<div class="t" style="left:977px;top:502.7px;font-size:9.7px;color:#e2f2d6">M: No Task</div>

<!-- ===== OUTPUT ===== -->
<div class="a" style="left:5px;top:448px;width:753px;height:54px;background:#fff;border:1px solid #8e9bbc;border-top:none;border-bottom:none"></div>
<div class="a" style="left:5px;top:448px;width:753px;height:19px;background:#4d6082;box-shadow:inset 1px 1px 0 #7888aa"></div>
<div class="t w" style="left:9px;top:453.3px">Вывод</div>
<svg style="left:716px;top:456px" width="6" height="4" viewBox="0 0 6 4"><path d="M0 0H6L3 3.5Z" fill="#fff"/></svg>
<svg style="left:730px;top:454px" width="7" height="10" viewBox="0 0 7 10"><path d="M1.5 0.5H5.5M2 0.5V5.5M5 0.5V5.5M0.5 5.5H6.5M3.5 5.5V9.5" fill="none" stroke="#fff" stroke-width="1"/></svg>
<svg style="left:744px;top:454px" width="8" height="8" viewBox="0 0 8 8"><path d="M0.5 0.5L7.5 7.5M7.5 0.5L0.5 7.5" stroke="#fff" stroke-width="1.2"/></svg>
<div class="a" style="left:6px;top:467px;width:751px;height:22px;background:#cfd6e5"></div>
<div class="t" style="left:11px;top:472.6px">Показать выходные данные из:</div>
<div class="a" style="left:11px;top:483px;width:7px;height:1px;background:#5a5a5a"></div>
<div class="a" style="left:153px;top:471px;width:240px;height:15px;background:#fff;border:1px solid #cbd1e0"></div>
<svg style="left:384px;top:477px" width="5" height="3" viewBox="0 0 5 3"><path d="M0 0H5L2.5 3Z" fill="#1e1e1e"/></svg>
<div class="a" style="left:398px;top:471px;width:1px;height:15px;background:#6c7a96"></div>
<div class="a" style="left:423px;top:471px;width:1px;height:15px;background:#6c7a96"></div>
<div class="a" style="left:466px;top:471px;width:1px;height:15px;background:#6c7a96"></div>
<div class="a" style="left:491px;top:471px;width:1px;height:15px;background:#6c7a96"></div>
<svg style="left:406px;top:472px" width="12" height="12" viewBox="0 0 12 12"><path d="M5 5.5 C2 5.5 2 1.5 5 1.5 H6 M4.5 0 L6 1.5 L4.5 3" stroke="#b3b7c2" stroke-width="0.9" fill="none"/><path d="M4 6.5H11M3 8.5H7M3 10.5H9" stroke="#b3b7c2" stroke-width="0.8"/></svg>
<svg style="left:432px;top:472px" width="11" height="12" viewBox="0 0 11 12"><path d="M6 4H1M3 2L1 4L3 6" stroke="#b3b7c2" stroke-width="1" fill="none"/><path d="M3 7.5H10M3 9.5H10M3 11.2H10" stroke="#b3b7c2" stroke-width="0.8"/></svg>
<svg style="left:450px;top:472px" width="11" height="12" viewBox="0 0 11 12"><path d="M0 4H5M3 2L5 4L3 6" stroke="#b3b7c2" stroke-width="1" fill="none"/><path d="M3 7.5H10M3 9.5H10M3 11.2H10" stroke="#b3b7c2" stroke-width="0.8"/></svg>
<svg style="left:475px;top:472px" width="12" height="12" viewBox="0 0 12 12"><path d="M0.5 0.5L5 5M5 0.5L0.5 5" stroke="#b3b7c2" stroke-width="0.9" fill="none"/><path d="M7 1.5H11M7 3.5H11M1 7H11M1 9H11M1 11H11" stroke="#b3b7c2" stroke-width="0.8"/></svg>
<svg style="left:499px;top:471px" width="14" height="13" viewBox="0 0 14 13"><path d="M1 0.5V4.5M1 2.5H3V4.5H1M4 1V4.5M4 3H6V4.5H4M3 7.5C1 7.5 1 10 3 10" stroke="#333" stroke-width="0.9" fill="none"/><path d="M12.5 3V8.5H6.5M8.5 6.5L6.5 8.5L8.5 10.5" stroke="#111" stroke-width="1.7" fill="none"/></svg>
<div class="a" style="left:5px;top:502px;width:38px;height:17px;background:#fff"></div>
<div class="t" style="left:10px;top:504.8px">Вывод</div>
<div class="a" style="left:44px;top:502px;width:79px;height:17px;background:#4d6082"></div>
<div class="t w" style="left:49px;top:504.8px">Список ошибок</div>

<!-- ===== STATUS BAR ===== -->
<div class="a" style="left:0;top:524px;width:1024px;height:20px;background:#007acc"></div>
<svg style="left:3px;top:529px" width="13" height="10" viewBox="0 0 13 10"><path d="M3 0.7H12.3L10 9.3H0.7Z" fill="none" stroke="#fff" stroke-width="1.1"/></svg>
<div class="t w" style="left:22px;top:528.5px">Готово</div>
<div class="t w" style="left:416px;top:528.5px">Строка 13</div>
<div class="t w" style="left:490px;top:528.5px">Столбец 23</div>
<div class="t w" style="left:563px;top:528.5px">Знак 20</div>
<div class="t w" style="left:672px;top:528.5px">ВСТ</div>
<svg style="left:800px;top:529px" width="8" height="10" viewBox="0 0 8 10"><path d="M4 10V1M0.7 4.3L4 1L7.3 4.3" stroke="#f3dcc0" stroke-width="1.3" fill="none"/></svg>
<div class="t w" style="left:815px;top:528.5px">Добавить в систему управления версиями</div>
<svg style="left:1005px;top:532px" width="7" height="4" viewBox="0 0 7 4"><path d="M0 4H7L3.5 0Z" fill="#fff"/></svg>

<!-- ===== TASKBAR ===== -->
<div class="a" style="left:0;top:544px;width:1024px;height:32px;background:#2e3134"></div>
<svg style="left:12px;top:553px" width="15" height="15" viewBox="0 0 15 15"><path d="M0 2 L6.5 1.1 V7 H0Z M7.5 1 L15 0 V7 H7.5Z M0 8 H6.5 V13.9 L0 13Z M7.5 8 H15 V15 L7.5 14Z" fill="#fff"/></svg>
<svg style="left:51px;top:553px" width="14" height="14" viewBox="0 0 14 14"><circle cx="8.5" cy="5.5" r="4.5" fill="none" stroke="#fff" stroke-width="1.2"/><path d="M5.3 8.7 L0.7 13.3" stroke="#fff" stroke-width="1.2"/></svg>
<svg style="left:89px;top:553px" width="14" height="14" viewBox="0 0 14 14"><rect x="1.5" y="3" width="7" height="8" fill="none" stroke="#fff" stroke-width="1.1"/><path d="M0 1.5H10M0 12.5H10M12.5 0V14" stroke="#fff" stroke-width="1.1"/></svg>
<svg style="left:129px;top:551px" width="17" height="17" viewBox="0 0 17 17"><path d="M1 9 C1 2 9 -1 14 3 C16.5 5 16.5 8 16 10 H5.5 C6 14 11 15 15 12.5 V15.5 C9 18 1 16 1 9Z M5.5 7.3 H11.8 C11.5 4 6.5 4 5.5 7.3Z" fill="#1e8fe0"/></svg>
<svg style="left:168px;top:553px" width="18" height="15" viewBox="0 0 18 15"><path d="M0.5 0.5H7L8 2H17.5V14.5H0.5Z" fill="#f8d775"/><path d="M0.5 2H17.5V4H0.5Z" fill="#e8b84a"/><path d="M5 7H13V14.5H11V10H7V14.5H5Z" fill="#3a9be8"/></svg>
<svg style="left:206px;top:554px" width="22" height="12" viewBox="0 0 22 12"><path d="M11 6 C8 1 2 1 2 6 C2 11 8 11 11 6 C14 1 20 1 20 6 C20 11 14 11 11 6" fill="none" stroke="#3ec3c8" stroke-width="1.8"/><path d="M11 6 C14 1 20 1 20 6 C20 11 14 11 11 6" fill="none" stroke="#a2d86a" stroke-width="1.8"/></svg>
<svg style="left:247px;top:550px" width="17" height="19" viewBox="0 0 17 19"><path d="M6 5 C6 1 11 1 11 5" fill="none" stroke="#ddd" stroke-width="1.3"/><rect x="0.5" y="5" width="16" height="14" fill="#fff"/><rect x="5" y="8.5" width="3" height="3" fill="#f25022"/><rect x="8.5" y="8.5" width="3" height="3" fill="#7fba00"/><rect x="5" y="12" width="3" height="3" fill="#00a4ef"/><rect x="8.5" y="12" width="3" height="3" fill="#ffb900"/></svg>
<div class="a" style="left:278px;top:544px;width:39px;height:30px;background:#5a5a5c"></div>
<div class="a" style="left:278px;top:574px;width:39px;height:2px;background:#76b9ed"></div>
<svg style="left:283px;top:546px" width="30" height="30" viewBox="0 0 24 24"><g fill="#8661c5" fill-rule="evenodd"><path d="M15.4 3.3 L19.8 5.2 V17.8 L15.8 19.3 L15.4 18.6Z"/><path d="M3.8 15.2 L15.4 17.0 L15.8 19.3 L4.6 16.4Z"/></g><g fill="none" stroke="#8661c5" stroke-linejoin="round"><path d="M4.9 8.1 L7.3 10 L4.9 11.9Z" stroke-width="1.7"/><path d="M7.6 10 L12.9 6.9 V13.1Z" stroke-width="1.9"/></g></svg>
<svg style="left:327px;top:551px" width="21" height="16" viewBox="0 0 21 16"><path d="M0.5 6 L10.5 0.3 L20.5 6 V16 H0.5Z" fill="#fff"/><path d="M1.5 6.3 L14 6.3 L9.5 8.3 L15.5 13.8 L7.5 9.2Z" fill="#151515"/></svg>
<svg style="left:369px;top:551px" width="20" height="19" viewBox="0 0 20 19"><path d="M2 0 H18 Q20 0 20 2 V19 L16 15.5 H2 Q0 15.5 0 13.5 V2 Q0 0 2 0Z" fill="#6176c0"/><path d="M5 5 Q10 3 15 5 L16 11 Q14 13 12.5 12 L12 11 Q10 12 8 11 L7.5 12 Q6 13 4 11Z" fill="#fff"/><circle cx="8" cy="8.3" r="1.2" fill="#6176c0"/><circle cx="12" cy="8.3" r="1.2" fill="#6176c0"/></svg>
<div class="a" style="left:361px;top:574px;width:32px;height:2px;background:#76b9ed"></div>
<svg style="left:408px;top:551px" width="18" height="18" viewBox="0 0 18 18"><circle cx="9" cy="9" r="9" fill="#db4437"/><path d="M9 9 L1.2 4.5 A9 9 0 0 0 9 18 Z" fill="#0f9d58"/><path d="M9 9 L16.8 4.5 A9 9 0 0 1 9 18 Z" fill="#ffcd40"/><circle cx="9" cy="9" r="4" fill="#fff"/><circle cx="9" cy="9" r="3.1" fill="#4285f4"/></svg>
<div class="a" style="left:401px;top:574px;width:32px;height:2px;background:#76b9ed"></div>
<svg style="left:447px;top:550px" width="20" height="20" viewBox="0 0 20 20"><defs><linearGradient id="mx" x1="0" y1="0" x2="0" y2="1"><stop offset="0" stop-color="#f6fcfc"/><stop offset="0.45" stop-color="#bfe8e4"/><stop offset="0.6" stop-color="#3fc3b7"/><stop offset="1" stop-color="#2fb4a8"/></linearGradient></defs><rect width="20" height="20" fill="url(#mx)"/><path d="M6 3 L11.5 2.5 L12.5 5 L10 7.5 L11.5 10 L9.5 13.5 L10.5 15.5 L7 15 L6 12.5 L8 10.5 L6.5 8 L8.5 6 Z" fill="#22ad9f"/><path d="M11.5 2.5 L14 5 L15 9 L14 12.5 L12 15 L10.5 15.5 L9.5 13.5 L11.5 10 L10 7.5 L12.5 5Z" fill="#0e7a6f"/><rect x="10" y="16" width="9" height="3" fill="#e8f2f2"/><path d="M10.5 18.5V16.5L11.5 17.7L12.5 16.5V18.5M13.5 18.5L14.5 16.5L15.5 18.5M16.3 16.5L18 18.5M18 16.5L16.3 18.5" stroke="#555" stroke-width="0.6" fill="none"/></svg>
<div class="a" style="left:441px;top:574px;width:32px;height:2px;background:#76b9ed"></div>
<!-- tray -->
<svg style="left:706px;top:553px" width="14" height="14" viewBox="0 0 14 14"><circle cx="9" cy="3" r="2.2" fill="none" stroke="#fff" stroke-width="1.1"/><path d="M6 8 C6 5.5 12 5.5 12 8 L13 9" fill="none" stroke="#fff" stroke-width="1.1"/><circle cx="4" cy="7" r="2.2" fill="none" stroke="#fff" stroke-width="1.1"/><path d="M0.5 13 C0.5 9.5 7.5 9.5 7.5 13" fill="none" stroke="#fff" stroke-width="1.1"/></svg>
<svg style="left:739px;top:556px" width="11" height="7" viewBox="0 0 11 7"><path d="M0.5 6 L5.5 1 L10.5 6" fill="none" stroke="#fff" stroke-width="1"/></svg>
<svg style="left:762px;top:555px" width="16" height="11" viewBox="0 0 16 11"><path d="M1 0.5V3M3.5 0.5V3M0.5 3H4V5.5L2.2 6.5V9" stroke="#fff" stroke-width="0.9" fill="none"/><rect x="5.5" y="3.5" width="9" height="6" fill="none" stroke="#fff"/><rect x="7" y="5" width="6" height="3" fill="#fff"/><rect x="14.5" y="5.3" width="1.3" height="2.4" fill="#fff"/></svg>
<svg style="left:789px;top:555px" width="14" height="11" viewBox="0 0 14 11"><path d="M0.5 3.5H3L6.5 0.5V10.5L3 7.5H0.5Z" fill="none" stroke="#fff"/><path d="M8.5 3 Q10 5.5 8.5 8M10.5 1.5 Q13 5.5 10.5 9.5" fill="none" stroke="#ccc"/></svg>
<svg style="left:816px;top:555px" width="12" height="11" viewBox="0 0 12 11"><path d="M0.5 6 A10 10 0 0 1 11 0.5 M2.5 8 A7 7 0 0 1 10 3 M5 9.5 A3.5 3.5 0 0 1 9 6.5" fill="none" stroke="#ddd"/><circle cx="10" cy="9.5" r="1" fill="#fff"/></svg>
<svg style="left:840px;top:554px" width="15" height="13" viewBox="0 0 15 13"><circle cx="5" cy="7" r="4.3" fill="#e8e8e8"/><circle cx="8" cy="5" r="4.5" fill="#d0d0d0"/><circle cx="10.5" cy="9.5" r="3.5" fill="#e0402a"/><path d="M9 8L12 11M12 8L9 11" stroke="#fff" stroke-width="0.9"/></svg>
<svg style="left:870px;top:555px" width="12" height="11" viewBox="0 0 12 11"><path d="M1 9 C0 7 4 5 5 7 C6 9 2 11 1 9Z M6 4 C5 2 9 0 10 2 C11 4 7 6 6 4Z M4 7 L8 3M3 10 L7 6M7 6 C9 8 11 6 11 4" fill="none" stroke="#ddd" stroke-width="1"/></svg>
<div class="t w" style="left:898px;top:554.3px;font-size:10.1px">ENG</div>
<div class="t w" style="left:940px;top:546.6px;font-size:10.6px">16:32</div>
<div class="t w" style="left:926px;top:561.4px;font-size:11.3px">09/11/2019</div>
<svg style="left:991px;top:553px" width="21" height="18" viewBox="0 0 21 18"><path d="M0.5 0.5H14.5V10.5H5L1.5 13.5V10.5H0.5Z" fill="#fff"/><path d="M3 3H12M3 5.5H12M3 8H10" stroke="#888"/><circle cx="15" cy="11.5" r="5.5" fill="#2e3134" stroke="#999" stroke-width="0.8"/><path d="M14 9.5L15.3 8.5V14" stroke="#fff" stroke-width="1.2" fill="none"/></svg>
<div class="a" style="left:1020px;top:546px;width:1px;height:28px;background:#666"></div>

</body></html>
